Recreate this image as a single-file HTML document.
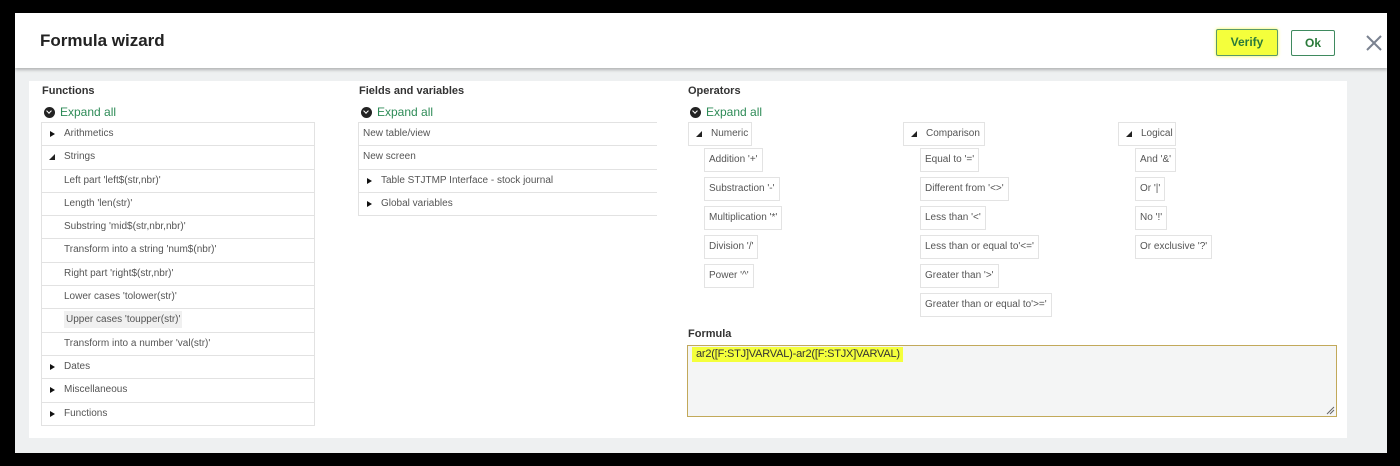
<!DOCTYPE html>
<html><head><style>
*{margin:0;padding:0;box-sizing:border-box}
body{width:1400px;height:466px;background:#000;position:relative;overflow:hidden;font-family:"Liberation Sans",sans-serif;color:#555}
.a{position:absolute}
.dlg{left:15px;top:13px;width:1372px;height:440px;background:#eef0f1}
.hdr{left:15px;top:13px;width:1372px;height:55px;background:#fff;box-shadow:0 2px 3px rgba(0,0,0,.25)}
.panel{left:29px;top:81px;width:1318px;height:357px;background:#fff}
h3{font-size:11px;font-weight:bold;color:#333}
.exp{font-size:12px;color:#2e8b57;display:flex;align-items:center}
.exp i{display:inline-block;width:11px;height:11px;border-radius:50%;background:#222;margin-right:5px;position:relative}
.exp i:after{content:"";position:absolute;left:3px;top:2px;width:3px;height:3px;border-right:1.6px solid #fff;border-bottom:1.6px solid #fff;transform:rotate(45deg)}
.list{border:1px solid #e2e2e2;border-bottom:none}
.list div{height:23.3px;border-bottom:1px solid #e2e2e2;font-size:10px;line-height:22px;color:#555;position:relative}
.tr{display:inline-block;width:0;height:0;border-top:3.5px solid transparent;border-bottom:3.5px solid transparent;border-left:5px solid #111;position:absolute;left:8px;top:8px}
.td{display:inline-block;width:0;height:0;border-left:6px solid transparent;border-bottom:6px solid #222;position:absolute;left:7px;top:8px}
.box{position:absolute;border:1px solid #e3e3e3;font-size:10px;line-height:22px;height:24px;padding:0 4px;color:#555;white-space:nowrap}
</style></head><body>
<div class="a dlg"></div>
<div class="a hdr"></div>
<div class="a" style="left:40px;top:31px;font-size:17px;font-weight:bold;color:#222">Formula wizard</div>
<div class="a" style="left:1216px;top:29px;width:62px;height:27px;background:#f4ff3c;border:1px solid #5a9a6a;border-radius:2px;font-size:12px;font-weight:bold;color:#2a7a3a;text-align:center;line-height:25px;box-shadow:0 0 3px #f4ff3c">Verify</div>
<div class="a" style="left:1291px;top:30px;width:44px;height:26px;background:#fff;border:1px solid #3f8a5f;border-radius:2px;font-size:12px;font-weight:bold;color:#2a7a3a;text-align:center;line-height:24px">Ok</div>
<svg class="a" style="left:1366px;top:35px" width="16" height="16"><path d="M1 1L15 15M15 1L1 15" stroke="#7a8290" stroke-width="2"/></svg>
<div class="a panel"></div>

<h3 class="a" style="left:42px;top:85px">Functions</h3>
<div class="a exp" style="left:44px;top:105px"><i></i>Expand all</div>
<div class="a list" style="left:41px;top:122px;width:274px">
<div><span class="tr"></span><span style="padding-left:22px">Arithmetics</span></div>
<div><span class="td"></span><span style="padding-left:22px">Strings</span></div>
<div style="padding-left:22px">Left part 'left$(str,nbr)'</div>
<div style="padding-left:22px">Length 'len(str)'</div>
<div style="padding-left:22px">Substring 'mid$(str,nbr,nbr)'</div>
<div style="padding-left:22px">Transform into a string 'num$(nbr)'</div>
<div style="padding-left:22px">Right part 'right$(str,nbr)'</div>
<div style="padding-left:22px">Lower cases 'tolower(str)'</div>
<div style="padding-left:22px"><span style="background:#f0f0f0;padding:3px 2px">Upper cases 'toupper(str)'</span></div>
<div style="padding-left:22px">Transform into a number 'val(str)'</div>
<div><span class="tr"></span><span style="padding-left:22px">Dates</span></div>
<div><span class="tr"></span><span style="padding-left:22px">Miscellaneous</span></div>
<div><span class="tr"></span><span style="padding-left:22px">Functions</span></div>
</div>

<h3 class="a" style="left:359px;top:85px">Fields and variables</h3>
<div class="a exp" style="left:361px;top:105px"><i></i>Expand all</div>
<div class="a list" style="left:358px;top:122px;width:299px;border-right:none">
<div style="padding-left:4px">New table/view</div>
<div style="padding-left:4px">New screen</div>
<div><span class="tr"></span><span style="padding-left:22px">Table STJTMP Interface - stock journal</span></div>
<div><span class="tr"></span><span style="padding-left:22px">Global variables</span></div>
</div>

<h3 class="a" style="left:688px;top:85px">Operators</h3>
<div class="a exp" style="left:690px;top:105px"><i></i>Expand all</div>

<div class="box" style="left:688px;top:122px;width:64px;padding-left:22px"><span class="td"></span>Numeric</div>
<div class="box" style="left:704px;top:148px">Addition '+'</div>
<div class="box" style="left:704px;top:177px">Substraction '-'</div>
<div class="box" style="left:704px;top:206px">Multiplication '*'</div>
<div class="box" style="left:704px;top:235px">Division '/'</div>
<div class="box" style="left:704px;top:264px">Power '^'</div>

<div class="box" style="left:903px;top:122px;width:82px;padding-left:22px"><span class="td"></span>Comparison</div>
<div class="box" style="left:920px;top:148px">Equal to '='</div>
<div class="box" style="left:920px;top:177px">Different from '&lt;&gt;'</div>
<div class="box" style="left:920px;top:206px">Less than '&lt;'</div>
<div class="box" style="left:920px;top:235px">Less than or equal to'&lt;='</div>
<div class="box" style="left:920px;top:264px">Greater than '&gt;'</div>
<div class="box" style="left:920px;top:293px">Greater than or equal to'&gt;='</div>

<div class="box" style="left:1118px;top:122px;width:58px;padding-left:22px"><span class="td"></span>Logical</div>
<div class="box" style="left:1135px;top:148px">And '&amp;'</div>
<div class="box" style="left:1135px;top:177px">Or '|'</div>
<div class="box" style="left:1135px;top:206px">No '!'</div>
<div class="box" style="left:1135px;top:235px">Or exclusive '?'</div>

<h3 class="a" style="left:688px;top:328px">Formula</h3>
<div class="a" style="left:687px;top:345px;width:650px;height:72px;background:#f4f5f5;border:1.5px solid #c2a95a"></div>
<div class="a" style="left:692px;top:347px;width:211px;height:15px;background:#f4ff3c"></div>
<div class="a" style="left:696px;top:347px;font-size:11px;letter-spacing:-0.2px;color:#333;line-height:15px">ar2([F:STJ]VARVAL)-ar2([F:STJX]VARVAL)</div>
<svg class="a" style="left:1326px;top:406px" width="9" height="9"><path d="M1 8L8 1M4 8L8 4" stroke="#666" stroke-width="1"/></svg>
</body></html>
